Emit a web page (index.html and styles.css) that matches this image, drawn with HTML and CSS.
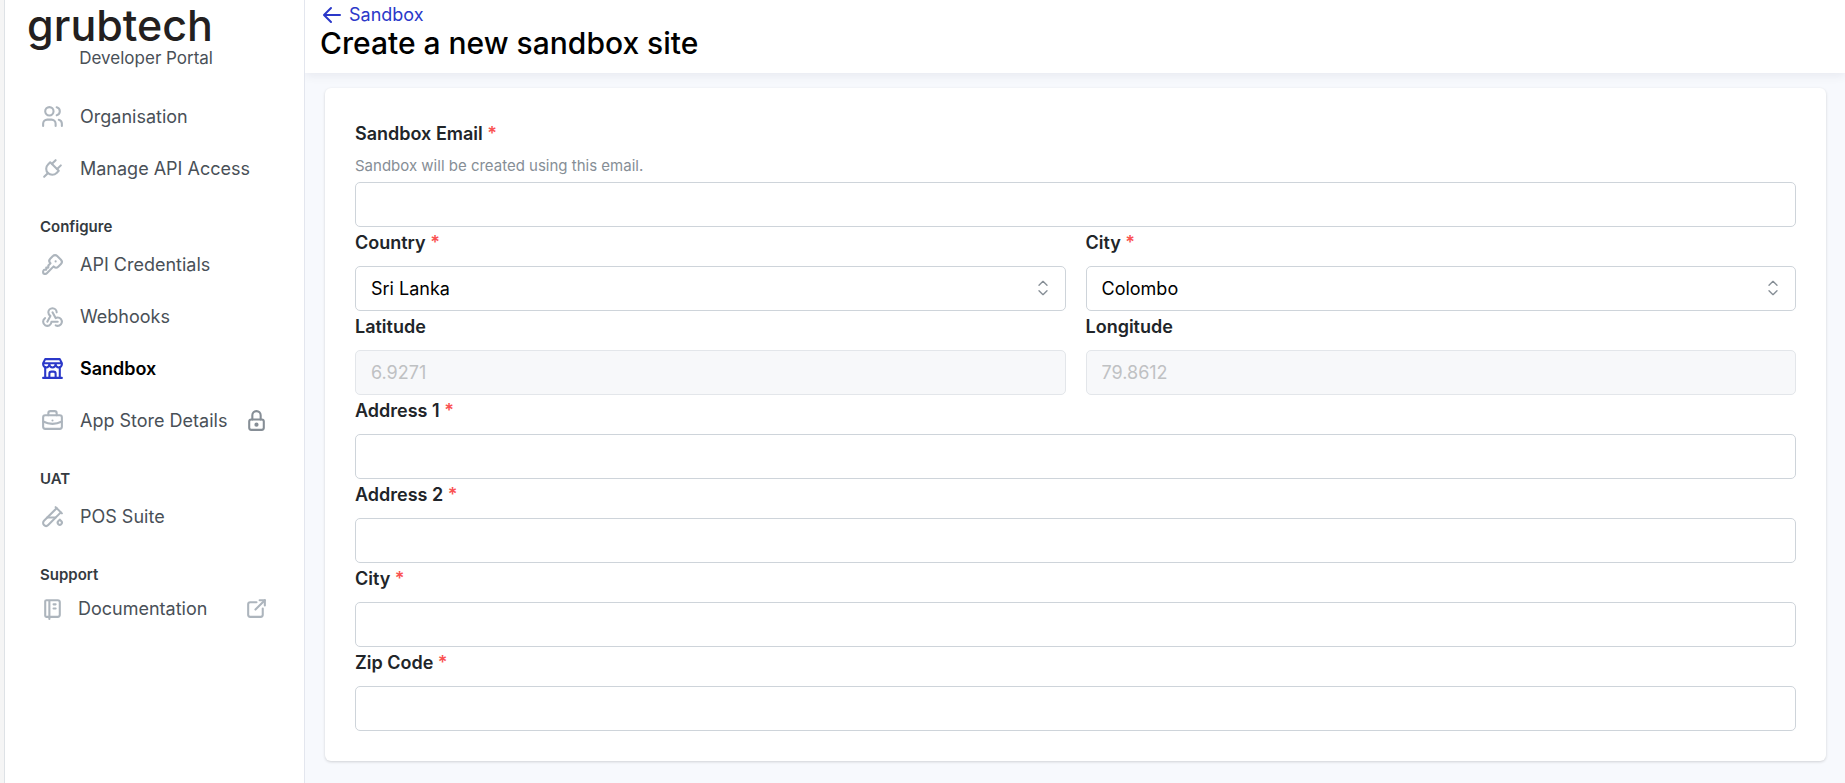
FILE: index.html
```html
<!DOCTYPE html>
<html lang="en">
<head>
<meta charset="utf-8">
<title>Create a new sandbox site</title>
<link rel="stylesheet" href="styles.css">
</head>
<body>
<div class="app">
  <aside class="sidebar">
    <div class="brand">
      <div class="brand-name">grubtech</div>
      <div class="brand-sub">Developer Portal</div>
    </div>
    <nav class="nav">
      <a class="nav-link" href="#organisation">
        <svg class="icon" viewBox="0 0 24 24"><path d="M5 7a4 4 0 1 0 8 0a4 4 0 1 0 -8 0"/><path d="M3 21v-2a4 4 0 0 1 4 -4h4a4 4 0 0 1 4 4v2"/><path d="M16 3.13a4 4 0 0 1 0 7.75"/><path d="M21 21v-2a4 4 0 0 0 -3 -3.85"/></svg>
        <span>Organisation</span>
      </a>
      <a class="nav-link" href="#api-access">
        <svg class="icon" viewBox="0 0 24 24"><path d="M9.785 6l8.215 8.215l-2.054 2.054a5.81 5.81 0 1 1 -8.215 -8.215l2.054 -2.054z"/><path d="M4 20l3.5 -3.5"/><path d="M15 4l-3.5 3.5"/><path d="M20 9l-3.5 3.5"/></svg>
        <span>Manage API Access</span>
      </a>
      <h2 class="nav-title">Configure</h2>
      <a class="nav-link" href="#credentials">
        <svg class="icon" viewBox="0 0 24 24"><path d="M14.5 3a2.9 2.9 0 0 1 2 .8l3.6 3.6a2.9 2.9 0 0 1 0 4.1l-2.6 2.6a2.9 2.9 0 0 1 -4.1 0l-.3 -.3l-6.5 6.6a2 2 0 0 1 -1.4 .6h-1.2a1 1 0 0 1 -1 -1v-1.2a2 2 0 0 1 .6 -1.4l.4 -.4h2v-2h2v-2l2.1 -2.1l-.3 -.3a2.9 2.9 0 0 1 0 -4.1l2.6 -2.6a2.9 2.9 0 0 1 2.1 -.9z"/><path d="M15 9h.01"/></svg>
        <span>API Credentials</span>
      </a>
      <a class="nav-link" href="#webhooks">
        <svg class="icon" viewBox="0 0 24 24"><path d="M4.876 13.61a4 4 0 1 0 6.124 3.39h6"/><path d="M15.066 20.502a4 4 0 1 0 1.934 -7.502c-.706 0 -1.424 .179 -2 .5l-3 -5.5"/><path d="M16 8a4 4 0 1 0 -8 0c0 1.506 .77 2.818 2 3.5l-3 5.5"/></svg>
        <span>Webhooks</span>
      </a>
      <a class="nav-link active" href="#sandbox" aria-current="page">
        <svg class="icon" viewBox="0 0 24 24"><path d="M3 21h18"/><path d="M3 7v1a3 3 0 0 0 6 0v-1m0 1a3 3 0 0 0 6 0v-1m0 1a3 3 0 0 0 6 0v-1h-18l2 -4h14l2 4"/><path d="M5 21v-10.15"/><path d="M19 21v-10.15"/><path d="M9 21v-4a2 2 0 0 1 2 -2h2a2 2 0 0 1 2 2v4"/></svg>
        <span>Sandbox</span>
      </a>
      <a class="nav-link" href="#app-store">
        <svg class="icon" viewBox="0 0 24 24"><path d="M3 9a2 2 0 0 1 2 -2h14a2 2 0 0 1 2 2v9a2 2 0 0 1 -2 2h-14a2 2 0 0 1 -2 -2z"/><path d="M8 7v-2a2 2 0 0 1 2 -2h4a2 2 0 0 1 2 2v2"/><path d="M12 12v.01"/><path d="M3 13a20 20 0 0 0 18 0"/></svg>
        <span>App Store Details</span>
        <svg class="icon trailing dark" viewBox="0 0 24 24"><path d="M5 13a2 2 0 0 1 2 -2h10a2 2 0 0 1 2 2v6a2 2 0 0 1 -2 2h-10a2 2 0 0 1 -2 -2z"/><path d="M11 16a1 1 0 1 0 2 0a1 1 0 0 0 -2 0"/><path d="M8 11v-4a4 4 0 1 1 8 0v4"/></svg>
      </a>
      <h2 class="nav-title">UAT</h2>
      <a class="nav-link" href="#pos">
        <svg class="icon" viewBox="0 0 24 24"><path d="M20 8.04l-12.122 12.124a2.857 2.857 0 1 1 -4.041 -4.04l12.122 -12.124"/><path d="M7 13h8"/><path d="M19 15l1.5 1.6a2 2 0 1 1 -3 0l1.5 -1.6z"/><path d="M15 3l6 6"/></svg>
        <span>POS Suite</span>
      </a>
      <h2 class="nav-title">Support</h2>
      <a class="nav-link compact" href="#docs">
        <svg class="icon" viewBox="0 0 24 24"><path d="M6 4h11a2 2 0 0 1 2 2v12a2 2 0 0 1 -2 2h-11a1 1 0 0 1 -1 -1v-14a1 1 0 0 1 1 -1m3 0v18"/><path d="M13 8h2"/><path d="M13 12h2"/></svg>
        <span>Documentation</span>
        <svg class="icon trailing" viewBox="0 0 24 24"><path d="M12 6h-6a2 2 0 0 0 -2 2v10a2 2 0 0 0 2 2h10a2 2 0 0 0 2 -2v-6"/><path d="M11 13l9 -9"/><path d="M15 4h5v5"/></svg>
      </a>
    </nav>
  </aside>

  <div class="main">
    <header class="header">
      <a class="back" href="#sandbox">
        <svg class="back-icon" viewBox="0 0 24 24"><path d="M5 12h15"/><path d="M11 5l-7 7l7 7"/></svg>
        <span>Sandbox</span>
      </a>
      <h1 class="title">Create a new sandbox site</h1>
    </header>

    <form class="card">
      <div class="field">
        <label class="label" for="email">Sandbox Email <span class="req">*</span></label>
        <p class="hint" id="email-hint">Sandbox will be created using this email.</p>
        <input class="control" id="email" type="email" aria-describedby="email-hint" required>
      </div>
      <div class="row">
        <div class="field">
          <label class="label spaced" for="country">Country <span class="req">*</span></label>
          <div class="select-wrap">
            <select class="control" id="country"><option>Sri Lanka</option></select>
            <svg class="chevrons" viewBox="0 0 24 24"><path d="M6 8l6 -6l6 6"/><path d="M6 16l6 6l6 -6"/></svg>
          </div>
        </div>
        <div class="field">
          <label class="label spaced" for="region-city">City <span class="req">*</span></label>
          <div class="select-wrap">
            <select class="control" id="region-city"><option>Colombo</option></select>
            <svg class="chevrons" viewBox="0 0 24 24"><path d="M6 8l6 -6l6 6"/><path d="M6 16l6 6l6 -6"/></svg>
          </div>
        </div>
      </div>
      <div class="row">
        <div class="field">
          <label class="label spaced" for="lat">Latitude</label>
          <input class="control" id="lat" type="text" value="6.9271" disabled>
        </div>
        <div class="field">
          <label class="label spaced" for="lng">Longitude</label>
          <input class="control" id="lng" type="text" value="79.8612" disabled>
        </div>
      </div>
      <div class="field">
        <label class="label spaced" for="address1">Address 1 <span class="req">*</span></label>
        <input class="control" id="address1" type="text" required>
      </div>
      <div class="field">
        <label class="label spaced" for="address2">Address 2 <span class="req">*</span></label>
        <input class="control" id="address2" type="text" required>
      </div>
      <div class="field">
        <label class="label spaced" for="city">City <span class="req">*</span></label>
        <input class="control" id="city" type="text" required>
      </div>
      <div class="field">
        <label class="label spaced" for="zip">Zip Code <span class="req">*</span></label>
        <input class="control" id="zip" type="text" required>
      </div>
    </form>
  </div>
</div>
</body>
</html>
```

FILE: styles.css
```css
* {
  box-sizing: border-box;
}

body {
  margin: 0;
  font-family: Inter, "Liberation Sans", sans-serif;
  font-size: 18px;
  color: #212529;
  background: #f7f9fd;
}

h1,
h2,
p {
  margin: 0;
}

.app {
  display: flex;
  min-height: 100vh;
  border-left: 4px solid #f5f5f5;
}

.sidebar {
  position: relative;
  z-index: 1;
  flex: 0 0 301px;
  border-left: 1px solid #dee2e6;
  border-right: 1px solid #e3e6ee;
  background: #fff;
}

.brand {
  width: 208px;
  color: #231f20;
  text-align: right;
}

.brand-name {
  height: 46px;
  font-size: 43px;
  font-weight: 500;
  line-height: 50px;
}

.brand-sub {
  font-size: 17px;
  line-height: 24px;
  color: #495057;
}

.nav {
  display: flex;
  flex-direction: column;
  padding: 20px 35px 0;
}

.nav-link {
  display: flex;
  align-items: center;
  gap: 15px;
  height: 52px;
  color: #495057;
  text-decoration: none;
}

.nav-link.compact {
  gap: 13px;
  height: 44px;
}

.nav-link.active {
  color: #000;
  font-weight: 600;
}

.nav-title {
  padding-top: 23px;
  font-size: 15px;
  font-weight: 600;
  line-height: 20px;
  color: #343a40;
}

.nav-title + .nav-link {
  margin-top: 1px;
}

.icon {
  flex: none;
  width: 25px;
  height: 25px;
  fill: none;
  stroke: #adb5bd;
  stroke-width: 2;
  stroke-linecap: round;
  stroke-linejoin: round;
}

.active .icon {
  stroke: #2b38c9;
}

.icon.trailing {
  margin-left: auto;
}

.icon.dark {
  stroke: #868e96;
}

.main {
  flex: 1;
  min-width: 0;
}

.header {
  height: 73px;
  padding: 3px 15px 0;
  background: #fff;
  box-shadow: 0 2px 10px rgba(30, 30, 60, 0.08);
}

.back {
  display: inline-flex;
  align-items: center;
  gap: 5px;
  line-height: 24px;
  color: #2b38c9;
  text-decoration: none;
  vertical-align: top;
}

.back-icon {
  width: 24px;
  height: 24px;
  fill: none;
  stroke: currentColor;
  stroke-width: 2;
  stroke-linecap: round;
  stroke-linejoin: round;
}

.title {
  font-size: 30px;
  font-weight: 500;
  line-height: 32px;
  color: #000;
}

.card {
  margin: 15px 19px 22px 20px;
  padding: 30px;
  border-radius: 6px;
  background: #fff;
  box-shadow: 0 1px 3px rgba(0, 0, 0, 0.16);
}

.row {
  display: grid;
  grid-template-columns: 1fr 1fr;
  gap: 20px;
}

.label {
  display: block;
  font-weight: 600;
  line-height: 31px;
}

.spaced {
  margin-bottom: 8px;
}

.req {
  color: #fa5252;
}

.hint {
  padding: 4px 0;
  font-size: 15px;
  line-height: 25px;
  color: #868e96;
}

.control {
  display: block;
  width: 100%;
  height: 45px;
  padding: 0 15px;
  border: 1px solid #ced4da;
  border-radius: 5px;
  background: #fff;
  color: #000;
  font: inherit;
  appearance: none;
}

.control:disabled {
  border-color: #e3e6ea;
  background: #f7f8fa;
  color: #bfc1c3;
}

.select-wrap {
  position: relative;
}

.chevrons {
  position: absolute;
  top: 14px;
  right: 15px;
  width: 16px;
  height: 16px;
  fill: none;
  stroke: #868e96;
  stroke-width: 2;
  stroke-linecap: round;
  stroke-linejoin: round;
  pointer-events: none;
}
```
